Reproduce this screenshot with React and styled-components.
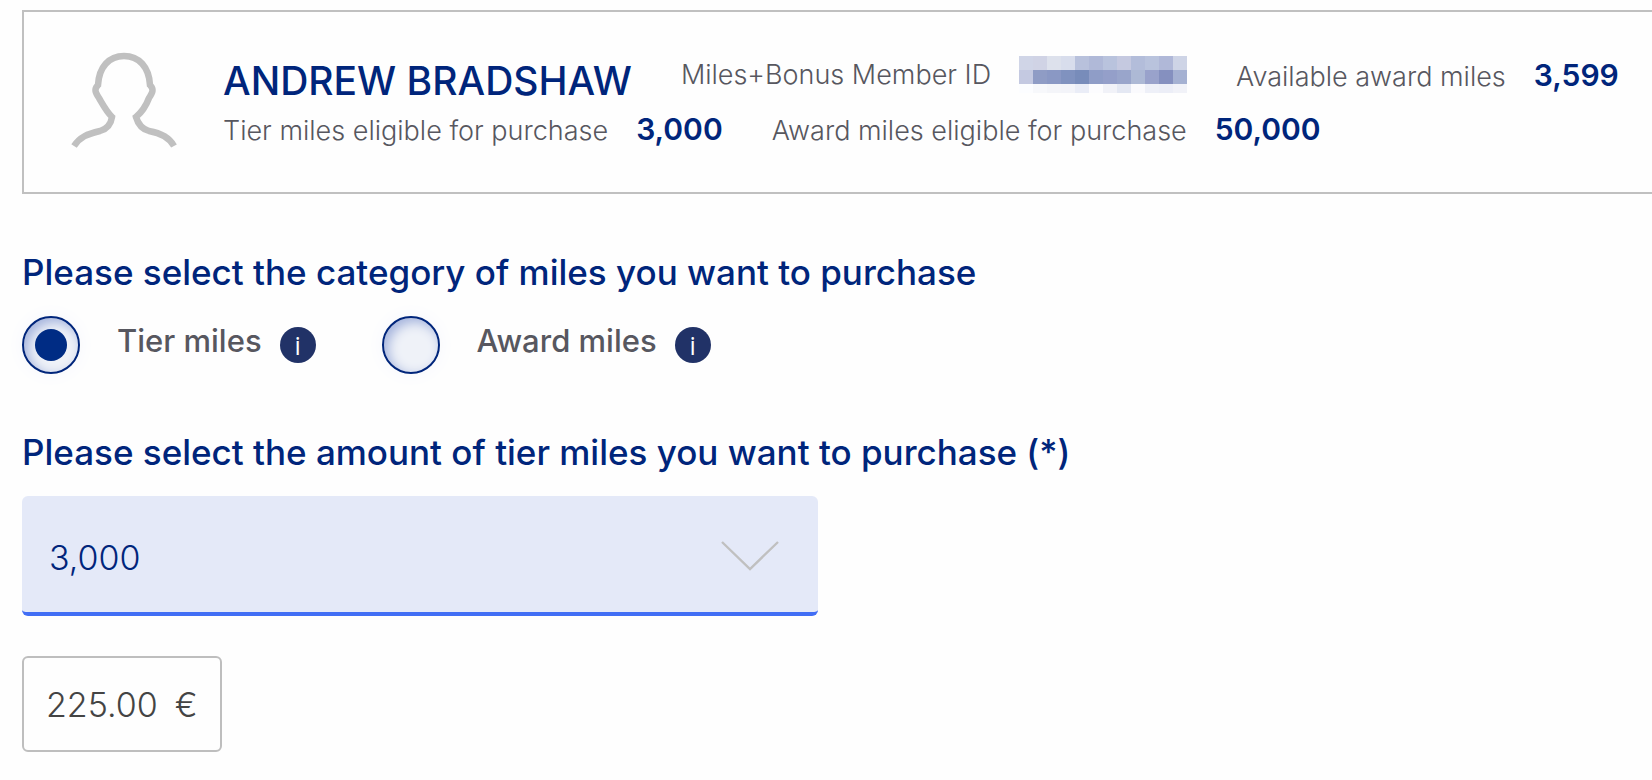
import React, { useState } from 'react';
import styled, { createGlobalStyle } from 'styled-components';

const GlobalStyle = createGlobalStyle`
  * {
    box-sizing: border-box;
  }

  body {
    margin: 0;
    background: #fefefe;
    color: #57575f;
    font-family: Inter, 'Liberation Sans', sans-serif;
    overflow-x: hidden;
  }
`;

const Page = styled.main`
  padding: 10px 0 28px 22px;
`;

const MemberPanel = styled.section`
  display: flex;
  align-items: flex-start;
  gap: 46px;
  min-height: 184px;
  padding: 40px 0 30px 47px;
  border: 2px solid #c0c0c0;
  border-right: none;
`;

const Avatar = styled.svg`
  flex: none;
  width: 106px;
  height: 96px;
`;

const MemberInfo = styled.div`
  display: flex;
  flex-direction: column;
  padding-top: 2px;
`;

const InfoRow = styled.div`
  display: flex;
  align-items: flex-start;
  gap: 49px;
  height: 54px;
  white-space: nowrap;
`;

const MemberName = styled.h1`
  margin: 0;
  color: #00257b;
  font-size: 39px;
  font-weight: 500;
  line-height: 54px;
`;

const InfoItem = styled.div`
  display: flex;
  align-items: baseline;
  gap: 28px;
  font-size: 27px;
  font-weight: 300;
  line-height: 42px;

  strong {
    color: #00257b;
    font-size: 30px;
    font-weight: 600;
  }
`;

const HiddenId = styled.svg`
  align-self: flex-start;
  width: 168px;
  height: 40px;
`;

const Group = styled.fieldset`
  min-width: 0;
  margin: 0;
  padding: 56px 0 0;
  border: 0;
`;

const Heading = styled.legend`
  float: left;
  width: 100%;
  padding: 0;
  color: #00257b;
  font-size: 35px;
  font-weight: 500;
  line-height: 44px;
`;

const HeadingLabel = styled.label`
  display: block;
  color: #00257b;
  font-size: 35px;
  font-weight: 500;
  line-height: 44px;
`;

const Options = styled.div`
  clear: both;
  display: flex;
  gap: 66px;
  padding-top: 22px;
`;

const Option = styled.div`
  display: flex;
  align-items: center;
  height: 58px;
`;

const Radio = styled.input`
  appearance: none;
  display: grid;
  place-items: center;
  width: 58px;
  height: 58px;
  margin: 0;
  border: 2px solid #00257b;
  border-radius: 50%;
  background: #eff2f8;
  box-shadow: inset 4px 4px 12px #a3b2dc, 0 0 20px #f6f7fd;
  cursor: pointer;

  &:checked::before {
    content: '';
    width: 32px;
    height: 32px;
    border-radius: 50%;
    background: #002c84;
  }
`;

const OptionLabel = styled.label`
  padding: 0 18px 8px 37px;
  font-size: 31px;
  font-weight: 500;
  line-height: 36px;
  cursor: pointer;
`;

const InfoButton = styled.button`
  width: 36px;
  height: 36px;
  padding: 0;
  border: 0;
  border-radius: 50%;
  background: #213267;
  color: #fff;
  font: 500 25px/36px 'Open Sans', sans-serif;
  cursor: pointer;
`;

const Amount = styled.section`
  padding-top: 56px;
`;

const SelectBox = styled.div`
  position: relative;
  max-width: 796px;
  margin-top: 22px;

  svg {
    position: absolute;
    top: 44px;
    right: 38px;
    width: 60px;
    height: 32px;
    pointer-events: none;
  }
`;

const Select = styled.select`
  appearance: none;
  display: block;
  width: 100%;
  height: 120px;
  padding: 8px 100px 0 27px;
  border: 0;
  border-bottom: 4px solid #416ef5;
  border-radius: 6px;
  background: #e4e9f8;
  color: #00257b;
  font: 300 34px/40px Inter, sans-serif;
`;

const Price = styled.output`
  display: inline-flex;
  align-items: center;
  gap: 17px;
  height: 96px;
  margin-top: 40px;
  padding: 0 22px;
  border: 2px solid #bebebe;
  border-radius: 6px;
  color: #444;
  font-size: 34px;
  font-weight: 300;
`;

const mosaic = [
  ['#d0d5e7', '#d0d3e5', '#dde1ec', '#d8ddec', '#b8c1dc', '#b0b9d8', '#b9c3dd', '#c5c9e0', '#b3bdda', '#b9c3dd', '#b0b8d8', '#ced4e6'],
  ['#c4c9e1', '#8f9cc5', '#8a98c4', '#8092bf', '#788cba', '#8f9dc7', '#949fc9', '#99a5cb', '#adb9d5', '#99a2cb', '#8590bf', '#a5b1d2'],
  ['#fcfdff', '#f7f8fb', '#f4f5f9', '#f3f4f9', '#eaedf7', '#fcfcfe', '#f1f2f8', '#e4e8f3', '#fafafd', '#eef0f8', '#eceef7', '#f1f2f8'],
];

const categories = [
  { id: 'tier', label: 'Tier miles' },
  { id: 'award', label: 'Award miles' },
];

const App = () => {
  const [category, setCategory] = useState('tier');

  return (
    <>
      <GlobalStyle />
      <Page>
        <MemberPanel>
          <Avatar viewBox="0 0 106 96" fill="none" stroke="#c0c0c0" strokeWidth="6.5" aria-hidden="true">
            <path d="M3 94C9 85 16 82 29 79C36 77 40 72 41 65C35 59 31 51 28 46C24 40 23 37 27 33C28 15 38 4 53 4C68 4 78 15 79 33C83 37 82 40 78 46C75 54 71 60 65 65C67 72 71 77 78 79C90 81 98 85 103 94" />
          </Avatar>
          <MemberInfo>
            <InfoRow>
              <MemberName>ANDREW BRADSHAW</MemberName>
              <InfoItem>
                Miles+Bonus Member ID
                <HiddenId viewBox="0 0 168 40" shapeRendering="crispEdges" role="img" aria-label="Hidden member ID">
                  {mosaic.map((row, y) => row.map((color, x) => (
                    <rect key={`${y}-${x}`} x={x * 14} y={y * 14 + 2} width="14" height={y === 2 ? 9 : 14} fill={color} />
                  )))}
                </HiddenId>
              </InfoItem>
              <InfoItem>
                Available award miles <strong>3,599</strong>
              </InfoItem>
            </InfoRow>
            <InfoRow>
              <InfoItem>
                Tier miles eligible for purchase <strong>3,000</strong>
              </InfoItem>
              <InfoItem>
                Award miles eligible for purchase <strong>50,000</strong>
              </InfoItem>
            </InfoRow>
          </MemberInfo>
        </MemberPanel>

        <Group>
          <Heading>Please select the category of miles you want to purchase</Heading>
          <Options>
            {categories.map((item) => (
              <Option key={item.id}>
                <Radio
                  type="radio"
                  name="category"
                  id={item.id}
                  checked={category === item.id}
                  onChange={() => setCategory(item.id)}
                />
                <OptionLabel htmlFor={item.id}>{item.label}</OptionLabel>
                <InfoButton type="button" aria-label={`About ${item.label}`}>i</InfoButton>
              </Option>
            ))}
          </Options>
        </Group>

        <Amount>
          <HeadingLabel htmlFor="amount">
            Please select the amount of {category} miles you want to purchase (*)
          </HeadingLabel>
          <SelectBox>
            <Select id="amount" defaultValue="3000">
              <option value="3000">3,000</option>
            </Select>
            <svg viewBox="0 0 60 32" fill="none" stroke="#c0c0c0" strokeWidth="2.4" aria-hidden="true">
              <path d="M2 2L30 29L58 2" />
            </svg>
          </SelectBox>
          <Price htmlFor="amount">
            <span>225.00</span>
            <span>€</span>
          </Price>
        </Amount>
      </Page>
    </>
  );
};

export default App;
